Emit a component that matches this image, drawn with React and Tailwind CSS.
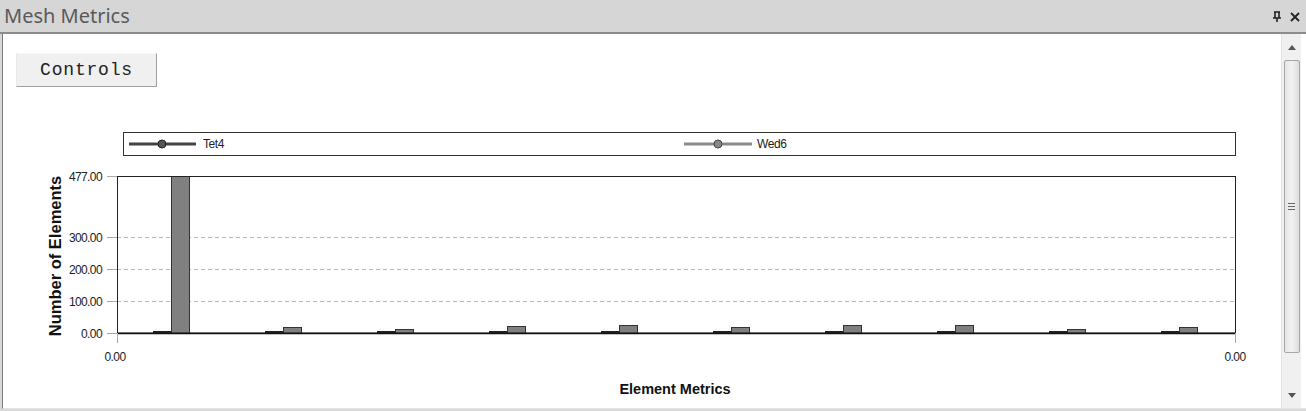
import React from 'react';

const wedHeights = [157, 6, 4, 7, 8, 6, 8, 8, 4, 6];

export default function App() {
  return (
    <div className="w-[1306px] h-[411px] bg-[#d8d8d8] flex flex-col overflow-hidden" style={{ fontFamily: '"Liberation Sans", Arial, sans-serif' }}>
      {/* Title bar */}
      <div className="h-[34px] flex items-center justify-between bg-[#d6d6d6] border-b-2 border-[#8c8c8c] pl-[4px] pr-[6px]">
        <span className="text-[20px] text-[#5a5a5a] leading-none" style={{ fontFamily: '"Noto Sans", "Open Sans", sans-serif' }}>Mesh Metrics</span>
        <div className="flex items-center gap-[8px] pt-[2px]">
          <svg width="10" height="12" viewBox="0 0 10 12">
            <path d="M2 1h6M3 1v6M7 1v6M1 7h8M5 7v4" stroke="#222" strokeWidth="1.6" fill="none" />
          </svg>
          <svg width="10" height="10" viewBox="0 0 10 10">
            <path d="M1 1l8 8M9 1l-8 8" stroke="#222" strokeWidth="1.8" />
          </svg>
        </div>
      </div>

      {/* Body */}
      <div className="flex-1 flex ml-[2px] border-l border-[#7a7a7a] bg-white border-b border-b-[#e4e4e4] mb-[2px]">
        <div className="flex-1 flex flex-col">
          <div className="pt-[19px] pl-[13px]">
            <button className="w-[141px] h-[34px] bg-[#f0f0f0] border border-t-[#f8f8f8] border-l-[#e8e8e8] border-r-[#a0a0a0] border-b-[#a0a0a0] text-[18px] tracking-[0.8px] text-[#222] flex items-center justify-center" style={{ fontFamily: '"Liberation Mono", "Courier New", monospace' }}>
              Controls
            </button>
          </div>
          <svg width="1277" height="320" viewBox="3 88 1277 320" className="block" style={{ fontFamily: '"Liberation Sans", Arial, sans-serif' }}>
            {/* Legend */}
            <rect x="123.5" y="133.5" width="1112" height="23" fill="white" stroke="#333" />
            <line x1="129" y1="145" x2="196" y2="145" stroke="#444" strokeWidth="3" />
            <circle cx="162" cy="145" r="4" fill="#555" stroke="#222" />
            <text x="203" y="149" fontSize="12" fill="#222" letterSpacing="-0.4">Tet4</text>
            <line x1="684" y1="145" x2="752" y2="145" stroke="#8a8a8a" strokeWidth="3" />
            <circle cx="718" cy="145" r="4" fill="#888" stroke="#444" />
            <text x="757" y="149" fontSize="12" fill="#222" letterSpacing="-0.4">Wed6</text>

            {/* Grid */}
            {[238, 270, 302].map((y) => (
              <line key={y} x1="117" y1={y + 0.5} x2="1236" y2={y + 0.5} stroke="#b8b8b8" strokeDasharray="4 3" />
            ))}
            {/* Y ticks and labels */}
            {[[177, '477.00'], [238, '300.00'], [270, '200.00'], [302, '100.00'], [334, '0.00']].map(([y, t]) => (
              <g key={t}>
                <line x1="107" y1={y + 0.5} x2="117" y2={y + 0.5} stroke="#aaa" />
                <text x="102" y={y + 5} fontSize="12" textAnchor="end" fill="#222" letterSpacing="-0.6">{t}</text>
              </g>
            ))}
            {/* Bars */}
            {wedHeights.map((h, i) => (
              <g key={i}>
                <rect x={153 + 112 * i} y="332" width="18" height="2" fill="#222" />
                <rect x={171.5 + 112 * i} y={334 - h + 0.5} width="18" height={h} fill="#808080" stroke="#333" />
              </g>
            ))}
            {/* Plot frame */}
            <rect x="117.5" y="177.5" width="1118" height="156.5" fill="none" stroke="#222" />
            <line x1="117" y1="334.5" x2="1236" y2="334.5" stroke="#111" strokeWidth="1.5" />
            {/* X ticks and labels */}
            <line x1="117.5" y1="334" x2="117.5" y2="344" stroke="#aaa" />
            <line x1="1235.5" y1="334" x2="1235.5" y2="344" stroke="#aaa" />
            <text x="115" y="362" fontSize="12" textAnchor="middle" fill="#222" letterSpacing="-0.6">0.00</text>
            <text x="1235" y="362" fontSize="12" textAnchor="middle" fill="#222" letterSpacing="-0.6">0.00</text>
            {/* Axis titles */}
            <text x="675" y="395" fontSize="14.5" fontWeight="bold" textAnchor="middle" fill="#111">Element Metrics</text>
            <text transform="translate(61 257) rotate(-90)" fontSize="16.5" fontWeight="bold" textAnchor="middle" fill="#111">Number of Elements</text>
          </svg>
        </div>

        {/* Scrollbar */}
        <div className="w-[20px] bg-[#f0f0f0] border-l border-[#e2e2e2] flex flex-col items-center">
          <div className="h-[26px] flex items-center justify-center">
            <svg width="8" height="5" viewBox="0 0 8 5"><path d="M0 5L4 0L8 5Z" fill="#555" /></svg>
          </div>
          <div className="w-[16px] h-[293px] rounded-[2px] border border-[#a6a6a6] bg-gradient-to-r from-[#e6e6e6] via-[#f2f2f2] to-[#dcdcdc] flex items-center justify-center">
            <div className="flex flex-col gap-[2px]">
              <div className="w-[7px] h-[1px] bg-[#666]" />
              <div className="w-[7px] h-[1px] bg-[#666]" />
              <div className="w-[7px] h-[1px] bg-[#666]" />
            </div>
          </div>
          <div className="flex-1 flex items-end justify-center pb-[10px]">
            <svg width="8" height="5" viewBox="0 0 8 5"><path d="M0 0L4 5L8 0Z" fill="#555" /></svg>
          </div>
        </div>
        <div className="w-[5px] bg-white" />
      </div>
    </div>
  );
}
